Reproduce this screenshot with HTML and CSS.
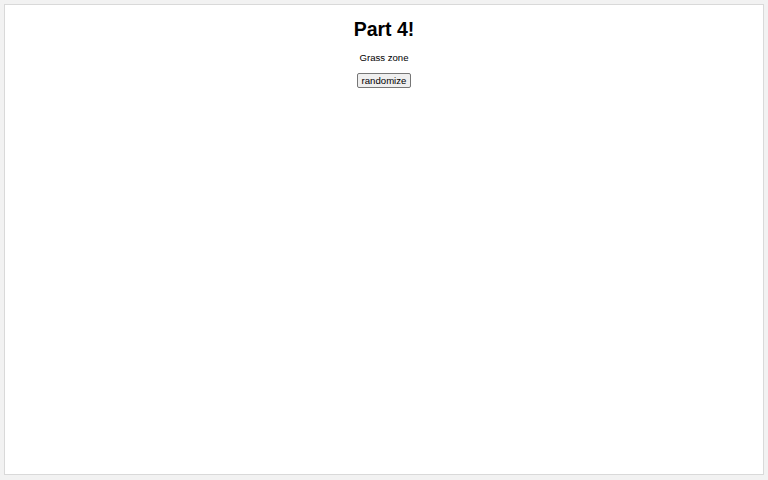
FILE: index.html
```html
<!DOCTYPE html>
<html>
<head>
<meta charset="utf-8">
<link rel="stylesheet" href="styles.css">
</head>
<body>
<div class="frame">
  <h1 class="title">Part 4!</h1>
  <p class="zone">Grass zone</p>
  <button class="btn">randomize</button>
</div>
</body>
</html>
```
FILE: styles.css
```css
html, body { margin: 0; padding: 0; }
body {
  background: #f2f2f2;
  padding: 4px 4px 5px 4px;
  font-family: "Liberation Sans", Arial, sans-serif;
  box-sizing: border-box;
  height: 480px;
}
.frame {
  background: #fff;
  border: 1px solid #d9d9d9;
  height: 100%;
  box-sizing: border-box;
  display: flex;
  flex-direction: column;
  align-items: center;
}
.title {
  font-size: 19.5px;
  font-weight: bold;
  margin: 13px 0 0 0;
  line-height: 23px;
  color: #000;
}
.zone {
  font-size: 9.6px;
  margin: 11px 0 0 0;
  line-height: 12px;
  color: #000;
}
.btn {
  font-family: "Liberation Sans", Arial, sans-serif;
  font-size: 9.6px;
  margin-top: 9px;
  padding: 1px 4px;
  line-height: 11px;
  background: #efefef;
  border: 1px solid #767676;
  border-radius: 2px;
  color: #000;
}
```
